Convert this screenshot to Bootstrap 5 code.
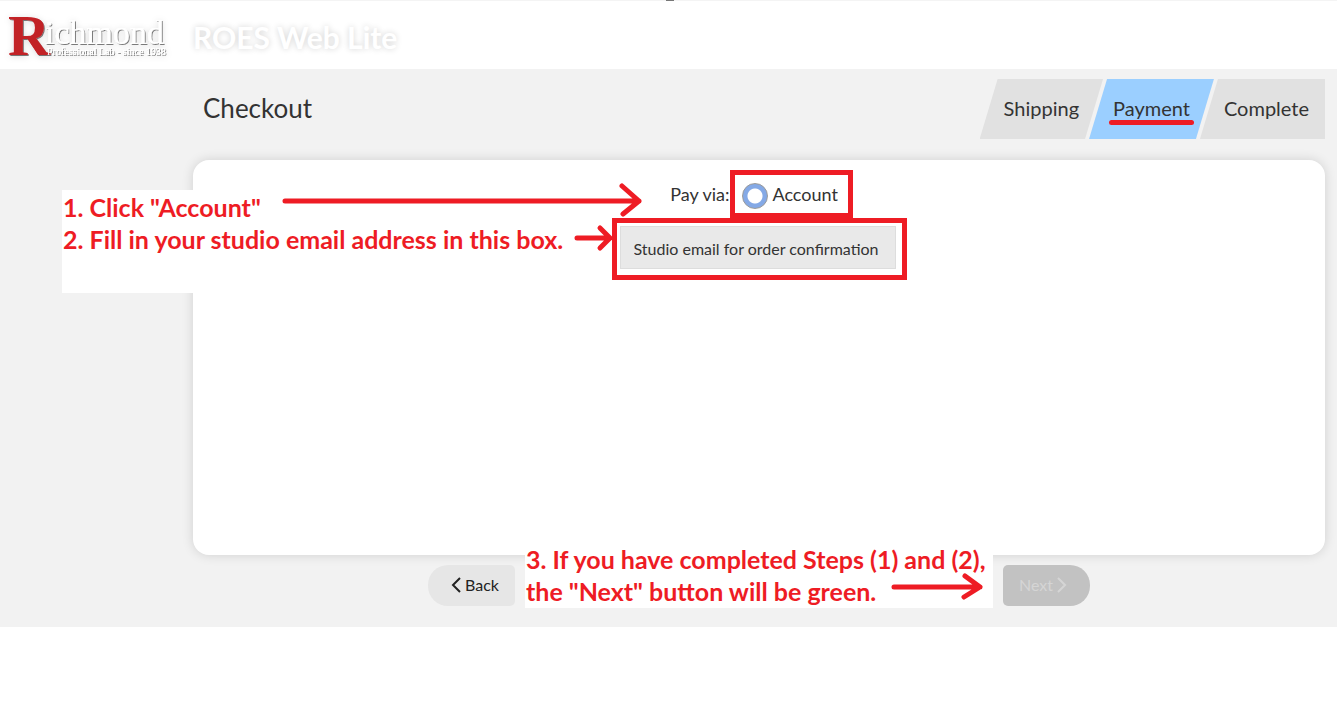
<!DOCTYPE html>
<html lang="en">
<head>
<meta charset="utf-8">
<meta name="viewport" content="width=device-width, initial-scale=1">
<title>ROES Web Lite - Checkout</title>
<link href="https://cdn.jsdelivr.net/npm/bootstrap@5.3.0/dist/css/bootstrap.min.css" rel="stylesheet">
<style>
  :root { --red: #ee1c24; --rail: 193px; }
  body { font-family: Lato, sans-serif; color: #333; background: #fff; }
  .site-header { height: 69px; border-top: 1px solid #f4f4f4; }
  .tab-handle { top: -1px; left: 50%; width: 8px; height: 1px; background: #777; margin-left: -3px; }
  .logo-link { width: var(--rail); padding: 0 0 0 4px; }
  .brand-title { font-size: 30px; line-height: 36px; font-weight: 700; color: #fff; text-shadow: 0 0 6px rgba(0,0,0,.18); padding-top: 18px; }
  .checkout-area { background: #f2f2f2; padding: 10px 12px 19px var(--rail); }
  .page-title { font-size: 26px; font-weight: 400; line-height: 58px; padding-left: 10px; }
  .step { display: block; height: 60px; line-height: 58px; padding: 0 24px; font-size: 20px; color: #333; text-decoration: none; background: #e1e1e1;
    clip-path: polygon(18px 0, 100% 0, calc(100% - 18px) 100%, 0 100%); }
  .step-item + .step-item { margin-left: -14px; }
  .step-current { background: #9bcfff; position: relative; }
  .step-current::after { content: ""; position: absolute; left: 20px; right: 20px; top: 41px; height: 5px; border-radius: 3px; background: var(--red); }
  .step-last { padding-right: 16px; clip-path: polygon(18px 0, 100% 0, 100% 100%, 0 100%); }
  .pay-panel { background: #fff; border-radius: 16px; min-height: 395px; margin-top: 21px; padding-top: 10px; box-shadow: 0 0 12px rgba(0,0,0,.14); }
  .pay-form { z-index: 1; }
  .pay-line { font-size: 18px; height: 48px; padding-left: 5px; }
  .marked { border: 5px solid var(--red); }
  .marked-account { height: 48px; padding: 0 10px 0 7px; gap: 4px; margin-left: 1px; }
  .account-radio { appearance: none; width: 26px; height: 26px; margin: 3px 0 0; border: 1px solid #999; border-radius: 50%; background: radial-gradient(circle, #fff 7px, #84a9e6 8px); }
  .marked-email { padding: 3px 6px 6px 3px; width: 295px; }
  .email-box { width: 100%; height: 43px; border: 1px solid #ddd; border-radius: 0; background: #e9e9e9; font-size: 16px; padding: 1px 12px 0 13px; color: #333; }
  .email-box::placeholder { color: #333; opacity: 1; }
  .note { font-family: Lato, sans-serif; font-weight: 700; font-size: 25px; line-height: 32px; color: var(--red); background: #fff; white-space: nowrap; }
  .note-steps { left: -131px; right: calc(50% + 117px); top: 30px; height: 103px; padding: 1px 0 0 1px; }
  .note-steps .second { width: 550px; }
  .note-next { margin-top: -22px; width: 468px; height: 65px; padding: 0 10px 0 1px; }
  .arrow { fill: none; stroke: var(--red); stroke-width: 5; stroke-linecap: round; stroke-linejoin: round; overflow: visible; flex-shrink: 0; }
  .nav-row { padding-top: 10px; gap: 10px; }
  .nav-btn { width: 87px; height: 41px; font-size: 16px; line-height: 24px; border: 0; padding: 0 0 2px; gap: 4px; color: #222; background: #e6e6e6; }
  .nav-back { border-radius: 20px 5px 5px 20px; padding-left: 7px; }
  .nav-next, .nav-next:disabled { border-radius: 5px 20px 20px 5px; padding-right: 7px; background: #c2c2c2; color: #d5d5d5; opacity: 1; }
</style>
</head>
<body>
<header class="site-header d-flex align-items-start position-relative">
  <span class="tab-handle position-absolute"></span>
  <a class="logo-link flex-shrink-0" href="#" aria-label="Richmond Professional Lab">
    <svg class="d-block" width="176" height="68" viewBox="0 -9 176 68">
      <defs>
        <filter id="soft" x="-10%" y="-20%" width="125%" height="150%">
          <feDropShadow dx="1" dy="1" stdDeviation=".7" flood-color="#000" flood-opacity=".5"/>
          <feDropShadow dx="0" dy="1" stdDeviation="3" flood-color="#000" flood-opacity=".14"/>
        </filter>
      </defs>
      <g filter="url(#soft)" font-family="Liberation Serif, serif" fill="#fff">
        <text x="4" y="45" font-size="58" font-weight="700" fill="#c22026">R</text>
        <text x="41" y="34" font-size="34">ichmond</text>
        <text x="43" y="45" font-size="10">Professional Lab - since 1938</text>
      </g>
    </svg>
  </a>
  <div class="brand-title">ROES Web Lite</div>
</header>

<main class="checkout-area">
  <div class="d-flex justify-content-between">
    <h1 class="page-title mb-0">Checkout</h1>
    <ol class="list-unstyled d-flex mb-0">
      <li class="step-item"><a class="step" href="#">Shipping</a></li>
      <li class="step-item"><a class="step step-current" href="#" aria-current="step">Payment</a></li>
      <li class="step-item"><a class="step step-last" href="#">Complete</a></li>
    </ol>
  </div>

  <section class="pay-panel position-relative">
    <div class="note note-steps position-absolute">
      <div class="d-flex justify-content-between">
        <span>1. Click "Account"</span>
        <svg class="arrow" width="362" height="32" viewBox="0 0 362 32"><path d="M5 10H359M342-5L359 10L343 23"/></svg>
      </div>
      <div class="second d-flex justify-content-between">
        <span>2. Fill in your studio email address in this box.</span>
        <svg class="arrow" width="40" height="32" viewBox="0 0 40 32"><path d="M4 15H37M27 5L37 15L27 25"/></svg>
      </div>
    </div>
    <form class="pay-form position-relative d-flex flex-column align-items-center">
      <div class="pay-line d-flex align-items-center">
        <span>Pay via:</span>
        <div class="marked marked-account d-flex align-items-center">
          <input class="account-radio" type="radio" name="pay" id="account">
          <label for="account">Account</label>
        </div>
      </div>
      <div class="marked marked-email">
        <input class="email-box d-block" type="email" aria-label="Studio email" placeholder="Studio email for order confirmation">
      </div>
    </form>
  </section>

  <div class="nav-row d-flex justify-content-center align-items-start position-relative">
    <button class="nav-btn nav-back d-flex align-items-center justify-content-center" type="button">
      <svg width="10" height="16" viewBox="0 0 10 16" fill="none" stroke="currentColor" stroke-width="2"><path d="M9 1L2 8L9 15"/></svg>Back</button>
    <div class="note note-next">
      <div>3. If you have completed Steps (1) and (2),</div>
      <div class="d-flex justify-content-between">
        <span>the "Next" button will be green.</span>
        <svg class="arrow" width="94" height="32" viewBox="0 0 94 32"><path d="M5 12H91M76 1L91 12L75 22"/></svg>
      </div>
    </div>
    <button class="nav-btn nav-next d-flex align-items-center justify-content-center" type="button" disabled>Next
      <svg width="10" height="16" viewBox="0 0 10 16" fill="none" stroke="currentColor" stroke-width="2"><path d="M1 1L8 8L1 15"/></svg></button>
  </div>
</main>
<script src="https://cdn.jsdelivr.net/npm/bootstrap@5.3.0/dist/js/bootstrap.bundle.min.js"></script>
</body>
</html>
